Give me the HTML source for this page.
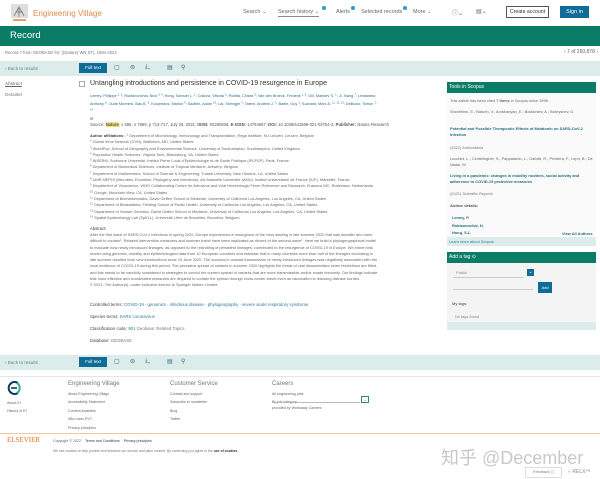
<!DOCTYPE html>
<html><head><meta charset="utf-8"><style>
*{margin:0;padding:0;box-sizing:border-box}
body{width:600px;height:479px;position:relative;overflow:hidden;background:#fff;font-family:"Liberation Sans",sans-serif;color:#555;font-size:4.6px}
sup{line-height:0;font-size:70%;vertical-align:1.5px}
.a{position:absolute;white-space:nowrap}
.lnk{color:#2a7a9a}
.tl{color:#1f6e7e;font-weight:bold}
.dot{position:absolute;width:4px;height:4px;border-radius:50%;background:#2a9ad6}
.ic{position:absolute;font-size:6px;color:#2a6a8a}
</style></head><body>
<!-- header -->
<svg class="a" style="left:10px;top:3px" width="19" height="20" viewBox="0 0 19 20"><rect x="1" y="1" width="17" height="14" fill="#ddd"/><path d="M4 13 L9 4 L14 13 M6 9h7 M9 4v10" stroke="#888" stroke-width="1" fill="none"/><rect x="3" y="16" width="13" height="2" fill="#e9a070"/></svg>
<div class="a" style="left:33px;top:9px;font-size:8px;color:#e08a4a">Engineering Village</div>
<div class="a" style="left:243px;top:9px;font-size:5.5px;color:#666">Search ⌄</div>
<div class="a" style="left:278px;top:9px;font-size:5.5px;color:#666;border-bottom:1px solid #888;padding-bottom:1px">Search history ⌄</div>
<div class="dot" style="left:322px;top:6px"></div>
<div class="a" style="left:336px;top:9px;font-size:5.5px;color:#666">Alerts</div>
<div class="dot" style="left:351px;top:6px"></div>
<div class="a" style="left:361px;top:9px;font-size:5.5px;color:#666">Selected records</div>
<div class="dot" style="left:403px;top:6px"></div>
<div class="a" style="left:413px;top:9px;font-size:5.5px;color:#666">More ⌄</div>
<div class="a" style="left:452px;top:8px;font-size:6px;color:#666">ⓘ⌄</div>
<div class="a" style="left:476px;top:8px;font-size:6px;color:#666">▤⌄</div>
<div class="a" style="left:506px;top:6px;width:43px;height:12px;border:1px solid #555;font-size:5.2px;color:#333;text-align:center;line-height:10px">Create account</div>
<div class="a" style="left:560px;top:6px;width:29px;height:12px;background:#0e6c97;font-size:5.5px;color:#fff;text-align:center;line-height:12px">Sign in</div>
<div class="a" style="left:0;top:26px;width:600px;height:20px;background:#0b7d67"></div>
<div class="a" style="left:10px;top:30px;font-size:9.5px;color:#fff">Record</div>
<div class="a" style="left:5px;top:50px;font-size:4.2px;color:#777">Record 7 from GEOBASE for: ((Nature) WN ST), 1884-2022</div>
<div class="a" style="left:564px;top:49px;font-size:5px;color:#666">‹ 7 of 260,878 ›</div>
<!-- toolbar -->
<div class="a" style="left:0;top:61px;width:600px;height:15px;background:#dcecea"></div>
<div class="a" style="left:5px;top:66px;color:#5a8a8a">‹ Back to results</div>
<div class="a" style="left:79px;top:63px;width:28px;height:10px;background:#0e6c97;color:#fff;font-size:4.5px;text-align:center;line-height:10px">Full text</div>
<div class="ic" style="left:114px;top:64px">▢</div><div class="ic" style="left:130px;top:64px">⊜</div><div class="ic" style="left:145px;top:64px">⤓⌄</div><div class="ic" style="left:167px;top:64px">▤</div><div class="ic" style="left:181px;top:64px">⚲</div>
<!-- left nav -->
<div class="a" style="left:5px;top:81px;color:#666;text-decoration:underline">Abstract</div>
<div class="a" style="left:5px;top:92px;color:#777">Detailed</div>
<!-- title -->
<div class="a" style="left:79px;top:81px;width:6px;height:6px;border:1px solid #aaa"></div>
<div class="a" style="left:90px;top:80px;font-size:7px;color:#333">Untangling introductions and persistence in COVID-19 resurgence in Europe</div>
<div class="a" style="left:90px;top:93px;font-size:3.8px;color:#2a6a8a;line-height:7.5px;white-space:normal;width:290px">Lemey, Philippe <sup>1, 2</sup>; Ruktanonchai, Nick <sup>3, 4</sup>; Hong, Samuel L. <sup>1</sup>; Colizza, Vittoria <sup>5</sup>; Pullitta, Chiara <sup>5</sup>; Van den Broeck, Frederik <sup>1, 6</sup>; Gill, Mandev S. <sup>1</sup>; Ji, Xiang <sup>7</sup>; Levasseur, Anthony <sup>8</sup>; Oude Munnink, Bas B. <sup>9</sup>; Koopmans, Marion <sup>9</sup>; Sadilek, Adam <sup>10</sup>; Lai, Shengjie <sup>3</sup>; Tatem, Andrew J. <sup>3</sup>; Baele, Guy <sup>1</sup>; Suchard, Marc A. <sup>11, 12, 13</sup>; Dellicour, Simon <sup>1, 14</sup><br>✉</div>
<div class="a" style="left:90px;top:122px;font-size:4.2px;color:#555">Source: <b style="background:#f6e27a">Nature</b>, v 595, n 7869, p 713-717, July 29, 2021; <b>ISSN:</b> 00280836, <b>E-ISSN:</b> 14764687; <b>DOI:</b> 10.1038/s41586-021-03754-2; <b>Publisher:</b> Nature Research</div>
<div class="a" style="left:90px;top:133px;font-size:3.9px;line-height:6.3px;color:#666">
<b style="color:#444">Author affiliations :</b> <sup>1</sup> Department of Microbiology, Immunology and Transplantation, Rega Institute, KU Leuven, Leuven, Belgium<br>
<sup>2</sup> Global Virus Network (GVN), Baltimore, MD, United States<br>
<sup>3</sup> WorldPop, School of Geography and Environmental Science, University of Southampton, Southampton, United Kingdom<br>
<sup>4</sup> Population Health Sciences, Virginia Tech, Blacksburg, VA, United States<br>
<sup>5</sup> INSERM, Sorbonne Université, Institut Pierre Louis d'Epidémiologie et de Santé Publique (IPLESP), Paris, France<br>
<sup>6</sup> Department of Biomedical Sciences, Institute of Tropical Medicine, Antwerp, Belgium<br>
<sup>7</sup> Department of Mathematics, School of Science &amp; Engineering, Tulane University, New Orleans, LA, United States<br>
<sup>8</sup> UMR MEPHI (Microbes, Evolution, Phylogeny and Infections), Aix Marseille Université (AMU), Institut Universitaire de France (IUF), Marseille, France<br>
<sup>9</sup> Department of Viroscience, WHO Collaborating Centre for Arbovirus and Viral Hemorrhagic Fever Reference and Research, Erasmus MC, Rotterdam, Netherlands<br>
<sup>10</sup> Google, Mountain View, CA, United States<br>
<sup>11</sup> Department of Biomathematics, David Geffen School of Medicine, University of California Los Angeles, Los Angeles, CA, United States<br>
<sup>12</sup> Department of Biostatistics, Fielding School of Public Health, University of California Los Angeles, Los Angeles, CA, United States<br>
<sup>13</sup> Department of Human Genetics, David Geffen School of Medicine, University of California Los Angeles, Los Angeles, CA, United States<br>
<sup>14</sup> Spatial Epidemiology Lab (SpELL), Université Libre de Bruxelles, Bruxelles, Belgium</div>
<div class="a" style="left:90px;top:226px;font-size:4.2px;color:#444">Abstract:</div>
<div class="a" style="left:90px;top:232px;width:288px;white-space:normal;font-size:3.9px;line-height:6.3px;color:#666">After the first wave of SARS-CoV-2 infections in spring 2020, Europe experienced a resurgence of the virus starting in late summer 2020 that was deadlier and more difficult to contain<sup>1</sup>. Relaxed intervention measures and summer travel have been implicated as drivers of the second wave<sup>2</sup>. Here we build a phylogeographical model to evaluate how newly introduced lineages, as opposed to the rekindling of persistent lineages, contributed to the resurgence of COVID-19 in Europe. We inform this model using genomic, mobility and epidemiological data from 10 European countries and estimate that in many countries more than half of the lineages circulating in late summer resulted from new introductions since 15 June 2020. The success in onward transmission of newly introduced lineages was negatively associated with the local incidence of COVID-19 during this period. The pervasive spread of variants in summer 2020 highlights the threat of viral dissemination when restrictions are lifted, and this needs to be carefully considered in strategies to control the current spread of variants that are more transmissible and/or evade immunity. Our findings indicate that more effective and coordinated measures are required to contain the spread through cross-border travel even as vaccination is reducing disease burden.<br>© 2021, The Author(s), under exclusive licence to Springer Nature Limited.</div>
<div class="a" style="left:90px;top:302px;font-size:4.3px;color:#444">Controlled terms: <span class="lnk">COVID-19 - genomics - infectious disease - phylogeography - severe acute respiratory syndrome</span></div>
<div class="a" style="left:90px;top:314px;font-size:4.3px;color:#444">Species terms: <span class="lnk">SARS coronavirus</span></div>
<div class="a" style="left:90px;top:326px;font-size:4.3px;color:#444">Classification code: <span class="lnk">901</span> <span style="color:#777">Geobase: Related Topics</span></div>
<div class="a" style="left:90px;top:338px;font-size:4.3px;color:#444">Database: <span style="color:#777">GEOBASE</span></div>
<!-- right panel -->
<div class="a" style="left:447px;top:82px;width:149px;height:165px;background:#fafafa"></div>
<div class="a" style="left:447px;top:82px;width:149px;height:11px;background:#0b7d67;color:#fff;font-size:5px;line-height:11px;padding-left:2px">Tools in Scopus</div>
<div class="a" style="left:450px;top:98px;width:144px;white-space:normal;font-size:3.9px;line-height:6px;color:#666">This article has been cited <b>7 times</b> in Scopus since 1996.</div>
<div class="a" style="left:450px;top:109px;width:144px;white-space:normal;font-size:3.9px;line-height:6px;color:#666">Shchetinin, E.; Baturin, V.; Arushanyan, E.; Bolatchiev, A.; Bobryshev, D.</div>
<div class="a tl" style="left:450px;top:126px;width:144px;white-space:normal;font-size:3.9px;line-height:6px">Potential and Possible Therapeutic Effects of Melatonin on SARS-CoV-2 Infection</div>
<div class="a" style="left:450px;top:145px;font-size:3.9px;color:#777">(2022) Antioxidants</div>
<div class="a" style="left:450px;top:156px;width:144px;white-space:normal;font-size:3.9px;line-height:6px;color:#666">Lucchini, L.; Centellegher, S.; Pappalardo, L.; Gallotti, R.; Privitera, F.; Lepri, B.; De Nadai, M.</div>
<div class="a tl" style="left:450px;top:173px;width:144px;white-space:normal;font-size:3.9px;line-height:6px">Living in a pandemic: changes in mobility routines, social activity and adherence to COVID-19 protective measures</div>
<div class="a" style="left:450px;top:191px;font-size:3.9px;color:#777">(2021) Scientific Reports</div>
<div class="a" style="left:450px;top:203px;font-size:4px;color:#555;font-weight:bold">Author details:</div>
<div class="a tl" style="left:452px;top:214px;font-size:3.9px;line-height:7.5px">Lemey, P.<br>Ruktanonchai, N.<br>Hong, S.L.</div>
<div class="a tl" style="left:562px;top:231px;font-size:3.9px">View All Authors</div>
<div class="a" style="left:447px;top:237px;width:149px;height:9px;background:#dcecea;color:#2a7a9a;font-size:3.9px;line-height:9px;padding-left:2px">Learn more about Scopus</div>
<!-- add tag -->
<div class="a" style="left:447px;top:252px;width:149px;height:78px;background:#f4f4f4"></div>
<div class="a" style="left:447px;top:252px;width:149px;height:11px;background:#0b7d67;color:#fff;font-size:5px;line-height:11px;padding-left:2px">Add a tag ⊙</div>
<div class="a" style="left:453px;top:270px;width:70px;border-bottom:1px solid #ccc;font-size:4px;color:#888;padding:0 3px 2px">Public</div>
<div class="a" style="left:527px;top:269px;width:7px;height:7px;background:#0e6c97;color:#fff;font-size:5px;line-height:6px;text-align:center">⌄</div>
<div class="a" style="left:453px;top:289px;width:80px;border-bottom:1px solid #ccc"></div>
<div class="a" style="left:538px;top:282px;width:14px;height:11px;background:#0e6c97;color:#fff;font-size:4px;line-height:11px;text-align:center">Add</div>
<div class="a" style="left:452px;top:301px;font-size:4px;color:#444">My tags:</div>
<div class="a" style="left:455px;top:314px;font-size:3.9px;color:#888">No tags found</div>
<div class="a" style="left:447px;top:322px;width:149px;height:8px;background:#dcecea"></div>
<!-- bottom toolbar -->
<div class="a" style="left:0;top:355px;width:600px;height:15px;background:#dcecea"></div>
<div class="a" style="left:5px;top:360px;color:#5a8a8a">‹ Back to results</div>
<div class="a" style="left:79px;top:357px;width:28px;height:10px;background:#0e6c97;color:#fff;font-size:4.5px;text-align:center;line-height:10px">Full text</div>
<div class="ic" style="left:114px;top:358px">▢</div><div class="ic" style="left:130px;top:358px">⊜</div><div class="ic" style="left:145px;top:358px">⤓⌄</div><div class="ic" style="left:167px;top:358px">▤</div><div class="ic" style="left:181px;top:358px">⚲</div>
<!-- footer -->
<div class="a" style="left:0;top:376px;width:600px;border-top:1px solid #e5e5e5"></div>
<svg class="a" style="left:7px;top:380px" width="16" height="16" viewBox="0 0 16 16"><path d="M11 3 A6 6 0 1 0 11 13" stroke="#0c3d5a" stroke-width="2" fill="none"/><path d="M10 3 A6 6 0 0 1 10 13" stroke="#2ab0a0" stroke-width="2" fill="none"/><path d="M4 8h6" stroke="#0c3d5a" stroke-width="1.6"/></svg>
<div class="a" style="left:7px;top:399px;font-size:3.6px;color:#666;line-height:8px">About EI<br>History of EI</div>
<div class="a" style="left:68px;top:381px;font-size:6px;color:#777">Engineering Village</div>
<div class="a" style="left:68px;top:390px;font-size:3.6px;color:#666;line-height:8.4px">About Engineering Village<br>Accessibility Statement<br>Content Available<br>Who uses EV?<br>Privacy principles</div>
<div class="a" style="left:170px;top:381px;font-size:6px;color:#777">Customer Service</div>
<div class="a" style="left:170px;top:390px;font-size:3.6px;color:#666;line-height:8.4px">Contact and support<br>Subscribe to newsletter<br>Blog<br>Twitter</div>
<div class="a" style="left:272px;top:381px;font-size:6px;color:#777">Careers</div>
<div class="a" style="left:272px;top:390px;font-size:3.6px;color:#666;line-height:8.4px">All engineering jobs<br>By job category</div>
<div class="a" style="left:272px;top:402px;width:88px;border-bottom:1px solid #bbb"></div>
<div class="a" style="left:361px;top:396px;width:8px;height:7px;border:1px solid #2a8a7a;font-size:4px;line-height:5px;text-align:center;color:#2a8a7a">⌄</div>
<div class="a" style="left:272px;top:406px;font-size:3.6px;color:#666">provided by Workaday Careers</div>
<div class="a" style="left:0;top:433px;width:600px;border-top:1px solid #f0c9a0"></div>
<div class="a" style="left:7px;top:436px;font-family:'Liberation Serif',serif;font-size:7px;color:#e9711c">ELSEVIER</div>
<div class="a" style="left:53px;top:439px;font-size:3.6px;color:#666">Copyright © 2022 &nbsp;&nbsp;&nbsp;<span style="color:#333">Terms and Conditions</span> &nbsp;&nbsp;&nbsp;<span style="color:#333">Privacy principles</span></div>
<div class="a" style="left:53px;top:449px;font-size:3.4px;color:#777">We use cookies to help provide and enhance our service and tailor content. By continuing you agree to the <b style="color:#333">use of cookies</b>.</div>
<div class="a" style="left:441px;top:444px;font-family:'Liberation Sans','Noto Sans CJK SC',sans-serif;font-size:18px;color:#c8c8c8">知乎 @December</div>
<div class="a" style="left:525px;top:467px;width:37px;height:11px;border:1px solid #ddd;font-size:3.8px;line-height:9px;text-align:center;color:#777">Feedback ◻</div>
<div class="a" style="left:568px;top:469px;font-size:5px;color:#888"><span style="color:#e9a040">◐</span> RELX™</div>
</body></html>
